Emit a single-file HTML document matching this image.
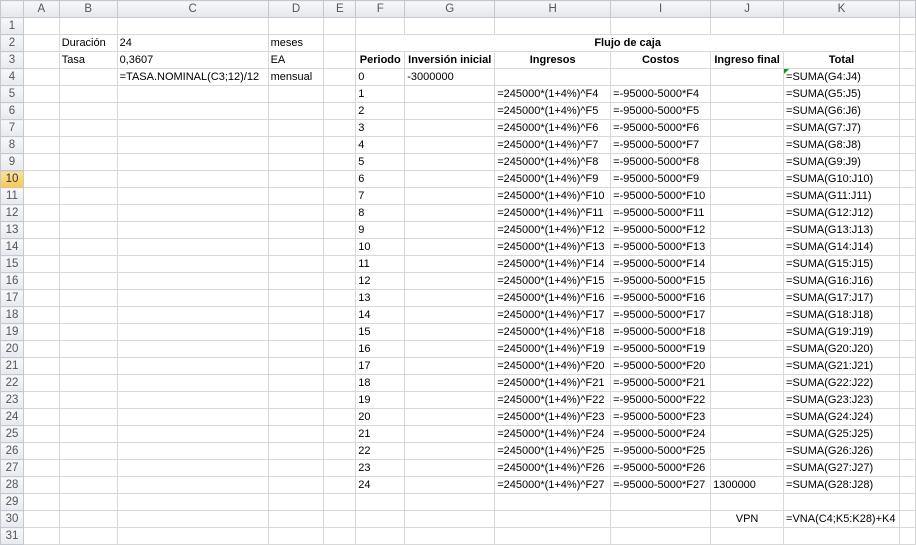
<!DOCTYPE html>
<html><head><meta charset="utf-8"><style>
body{margin:0;background:#fff;overflow:hidden;width:916px;height:537px}
table{border-collapse:collapse;table-layout:fixed;font-family:"Liberation Sans",sans-serif;font-size:11px;color:#000}
td{height:16px;border:1px solid #d8d8d8;padding:0 0 0 2px;white-space:nowrap;overflow:visible;line-height:16px}
tr.h td{background:linear-gradient(#f7f8fa,#e4e7ec);color:#555;text-align:center;border-color:#c5c9cf;height:15px;padding:0;font-size:11.5px}
td.r{background:linear-gradient(#f7f8fa,#e6e9ee);color:#555;text-align:center;border-color:#c5c9cf;padding:0;font-size:11.5px}
td.sel{background:linear-gradient(#fbe3a0,#f5c84f);color:#333}
b{font-weight:bold}
.c{text-align:center;padding:0}
.k4{position:relative}
.k4:before{content:"";position:absolute;left:0;top:0;border-top:5px solid #1f8a1f;border-right:5px solid transparent}
</style></head><body>
<table>
<colgroup><col style="width:23px"><col style="width:36px"><col style="width:58px"><col style="width:151px"><col style="width:56px"><col style="width:32px"><col style="width:49px"><col style="width:90px"><col style="width:116px"><col style="width:100px"><col style="width:73px"><col style="width:116px"><col style="width:16px"></colgroup>
<tr class="h"><td></td><td>A</td><td>B</td><td>C</td><td>D</td><td>E</td><td>F</td><td>G</td><td>H</td><td>I</td><td>J</td><td>K</td><td></td></tr>
<tr><td class="r">1</td><td></td><td></td><td></td><td></td><td></td><td></td><td></td><td></td><td></td><td></td><td></td><td></td></tr>
<tr><td class="r">2</td><td></td><td>Duración</td><td>24</td><td>meses</td><td></td><td colspan="6" class="c"><b>Flujo de caja</b></td><td></td></tr>
<tr><td class="r">3</td><td></td><td>Tasa</td><td>0,3607</td><td>EA</td><td></td><td class="c"><b>Periodo</b></td><td class="c"><b>Inversión inicial</b></td><td class="c"><b>Ingresos</b></td><td class="c"><b>Costos</b></td><td class="c"><b>Ingreso final</b></td><td class="c"><b>Total</b></td><td></td></tr>
<tr><td class="r">4</td><td></td><td></td><td>=TASA.NOMINAL(C3;12)/12</td><td>mensual</td><td></td><td>0</td><td>-3000000</td><td></td><td></td><td></td><td class="k4">=SUMA(G4:J4)</td><td></td></tr>
<tr><td class="r">5</td><td></td><td></td><td></td><td></td><td></td><td>1</td><td></td><td>=245000*(1+4%)^F4</td><td>=-95000-5000*F4</td><td></td><td>=SUMA(G5:J5)</td><td></td></tr>
<tr><td class="r">6</td><td></td><td></td><td></td><td></td><td></td><td>2</td><td></td><td>=245000*(1+4%)^F5</td><td>=-95000-5000*F5</td><td></td><td>=SUMA(G6:J6)</td><td></td></tr>
<tr><td class="r">7</td><td></td><td></td><td></td><td></td><td></td><td>3</td><td></td><td>=245000*(1+4%)^F6</td><td>=-95000-5000*F6</td><td></td><td>=SUMA(G7:J7)</td><td></td></tr>
<tr><td class="r">8</td><td></td><td></td><td></td><td></td><td></td><td>4</td><td></td><td>=245000*(1+4%)^F7</td><td>=-95000-5000*F7</td><td></td><td>=SUMA(G8:J8)</td><td></td></tr>
<tr><td class="r">9</td><td></td><td></td><td></td><td></td><td></td><td>5</td><td></td><td>=245000*(1+4%)^F8</td><td>=-95000-5000*F8</td><td></td><td>=SUMA(G9:J9)</td><td></td></tr>
<tr><td class="r sel">10</td><td></td><td></td><td></td><td></td><td></td><td>6</td><td></td><td>=245000*(1+4%)^F9</td><td>=-95000-5000*F9</td><td></td><td>=SUMA(G10:J10)</td><td></td></tr>
<tr><td class="r">11</td><td></td><td></td><td></td><td></td><td></td><td>7</td><td></td><td>=245000*(1+4%)^F10</td><td>=-95000-5000*F10</td><td></td><td>=SUMA(G11:J11)</td><td></td></tr>
<tr><td class="r">12</td><td></td><td></td><td></td><td></td><td></td><td>8</td><td></td><td>=245000*(1+4%)^F11</td><td>=-95000-5000*F11</td><td></td><td>=SUMA(G12:J12)</td><td></td></tr>
<tr><td class="r">13</td><td></td><td></td><td></td><td></td><td></td><td>9</td><td></td><td>=245000*(1+4%)^F12</td><td>=-95000-5000*F12</td><td></td><td>=SUMA(G13:J13)</td><td></td></tr>
<tr><td class="r">14</td><td></td><td></td><td></td><td></td><td></td><td>10</td><td></td><td>=245000*(1+4%)^F13</td><td>=-95000-5000*F13</td><td></td><td>=SUMA(G14:J14)</td><td></td></tr>
<tr><td class="r">15</td><td></td><td></td><td></td><td></td><td></td><td>11</td><td></td><td>=245000*(1+4%)^F14</td><td>=-95000-5000*F14</td><td></td><td>=SUMA(G15:J15)</td><td></td></tr>
<tr><td class="r">16</td><td></td><td></td><td></td><td></td><td></td><td>12</td><td></td><td>=245000*(1+4%)^F15</td><td>=-95000-5000*F15</td><td></td><td>=SUMA(G16:J16)</td><td></td></tr>
<tr><td class="r">17</td><td></td><td></td><td></td><td></td><td></td><td>13</td><td></td><td>=245000*(1+4%)^F16</td><td>=-95000-5000*F16</td><td></td><td>=SUMA(G17:J17)</td><td></td></tr>
<tr><td class="r">18</td><td></td><td></td><td></td><td></td><td></td><td>14</td><td></td><td>=245000*(1+4%)^F17</td><td>=-95000-5000*F17</td><td></td><td>=SUMA(G18:J18)</td><td></td></tr>
<tr><td class="r">19</td><td></td><td></td><td></td><td></td><td></td><td>15</td><td></td><td>=245000*(1+4%)^F18</td><td>=-95000-5000*F18</td><td></td><td>=SUMA(G19:J19)</td><td></td></tr>
<tr><td class="r">20</td><td></td><td></td><td></td><td></td><td></td><td>16</td><td></td><td>=245000*(1+4%)^F19</td><td>=-95000-5000*F19</td><td></td><td>=SUMA(G20:J20)</td><td></td></tr>
<tr><td class="r">21</td><td></td><td></td><td></td><td></td><td></td><td>17</td><td></td><td>=245000*(1+4%)^F20</td><td>=-95000-5000*F20</td><td></td><td>=SUMA(G21:J21)</td><td></td></tr>
<tr><td class="r">22</td><td></td><td></td><td></td><td></td><td></td><td>18</td><td></td><td>=245000*(1+4%)^F21</td><td>=-95000-5000*F21</td><td></td><td>=SUMA(G22:J22)</td><td></td></tr>
<tr><td class="r">23</td><td></td><td></td><td></td><td></td><td></td><td>19</td><td></td><td>=245000*(1+4%)^F22</td><td>=-95000-5000*F22</td><td></td><td>=SUMA(G23:J23)</td><td></td></tr>
<tr><td class="r">24</td><td></td><td></td><td></td><td></td><td></td><td>20</td><td></td><td>=245000*(1+4%)^F23</td><td>=-95000-5000*F23</td><td></td><td>=SUMA(G24:J24)</td><td></td></tr>
<tr><td class="r">25</td><td></td><td></td><td></td><td></td><td></td><td>21</td><td></td><td>=245000*(1+4%)^F24</td><td>=-95000-5000*F24</td><td></td><td>=SUMA(G25:J25)</td><td></td></tr>
<tr><td class="r">26</td><td></td><td></td><td></td><td></td><td></td><td>22</td><td></td><td>=245000*(1+4%)^F25</td><td>=-95000-5000*F25</td><td></td><td>=SUMA(G26:J26)</td><td></td></tr>
<tr><td class="r">27</td><td></td><td></td><td></td><td></td><td></td><td>23</td><td></td><td>=245000*(1+4%)^F26</td><td>=-95000-5000*F26</td><td></td><td>=SUMA(G27:J27)</td><td></td></tr>
<tr><td class="r">28</td><td></td><td></td><td></td><td></td><td></td><td>24</td><td></td><td>=245000*(1+4%)^F27</td><td>=-95000-5000*F27</td><td>1300000</td><td>=SUMA(G28:J28)</td><td></td></tr>
<tr><td class="r">29</td><td></td><td></td><td></td><td></td><td></td><td></td><td></td><td></td><td></td><td></td><td></td><td></td></tr>
<tr><td class="r">30</td><td></td><td></td><td></td><td></td><td></td><td></td><td></td><td></td><td></td><td class="c">VPN</td><td>=VNA(C4;K5:K28)+K4</td><td></td></tr>
<tr><td class="r">31</td><td></td><td></td><td></td><td></td><td></td><td></td><td></td><td></td><td></td><td></td><td></td><td></td></tr>
</table>
</body></html>
